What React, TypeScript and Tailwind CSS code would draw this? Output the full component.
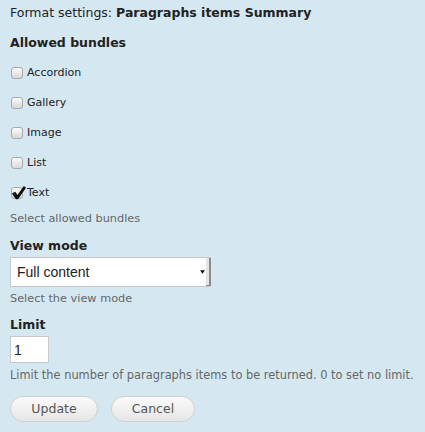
import React, { useState } from 'react'

const bundles = ['Accordion', 'Gallery', 'Image', 'List', 'Text']

function Checkbox({ checked, onChange }: { checked: boolean; onChange: () => void }) {
  return (
    <button
      type="button"
      onClick={onChange}
      className="relative w-[12px] h-[12px] rounded-[3px] border border-[#a9a9a9] bg-gradient-to-b from-[#fcfcfc] to-[#d8d8d8] shrink-0"
    >
      {checked && (
        <svg viewBox="0 0 14 14" className="absolute left-[-1px] top-[-3px] w-[15px] h-[15px]">
          <path d="M0.8 8 L4 6.4 L6 9.4 L12 1 L14 2.6 L6.6 13.2 L4.6 13.2 Z" fill="#111" />
        </svg>
      )}
    </button>
  )
}

export default function App() {
  const [checked, setChecked] = useState<Record<string, boolean>>({ Text: true })
  const [limit, setLimit] = useState('1')

  return (
    <div className="w-[425px] h-[432px] bg-[#d5e8f1] px-[10px] pt-[4px] flex flex-col text-[#222] font-['DejaVu_Sans',sans-serif]">
      <div className="text-[12.5px] leading-[18px]">
        Format settings: <span className="font-bold">Paragraphs items Summary</span>
      </div>

      <div className="mt-[12px] text-[12.5px] leading-[18px] font-bold">Allowed bundles</div>

      <div className="mt-[6px] flex flex-col">
        {bundles.map((b) => (
          <label key={b} className="h-[30px] flex items-center gap-[4px] pl-[1px] text-[11px]">
            <Checkbox
              checked={!!checked[b]}
              onChange={() => setChecked((c) => ({ ...c, [b]: !c[b] }))}
            />
            {b}
          </label>
        ))}
      </div>

      <div className="mt-[3px] text-[11.3px] leading-[16px] text-[#666]">Select allowed bundles</div>

      <div className="mt-[10px] text-[12.5px] leading-[18px] font-bold">View mode</div>
      <div className="mt-[2px] w-[201px] h-[30px] flex border border-[#c8c8c8] border-r-0 bg-white">
        <div className="flex-1 flex items-center pl-[6px] text-[14px] text-[#222] font-['Liberation_Sans',Arial,sans-serif]">
          Full content
        </div>
        <div className="w-[7px] flex items-center justify-start">
          <svg viewBox="0 0 6 4" className="w-[5px] h-[4px] ml-[1px]">
            <path d="M0 0 H6 L3 4 Z" fill="#111" />
          </svg>
        </div>
        <div className="w-[5px] bg-[#e4e4e4] border-r-[2px] border-b-[1px] border-[#8a8a8a]" />
      </div>

      <div className="mt-[4px] text-[11.3px] leading-[16px] text-[#666]">Select the view mode</div>

      <div className="mt-[9px] text-[12.5px] leading-[18px] font-bold">Limit</div>
      <input
        value={limit}
        onChange={(e) => setLimit(e.target.value)}
        className="mt-[2px] w-[39px] h-[27px] border border-[#c8c8c8] bg-white pl-[3px] text-[14px] text-[#222] outline-none font-['Liberation_Sans',Arial,sans-serif]"
      />
      <div className="mt-[4px] text-[11.4px] leading-[16px] text-[#666] whitespace-nowrap">
        Limit the number of paragraphs items to be returned. 0 to set no limit.
      </div>

      <div className="mt-[13px] flex gap-[13px]">
        <button className="w-[88px] h-[26px] rounded-full border border-[#d0d0d0] bg-gradient-to-b from-[#fafafa] to-[#e6e6e6] text-[12.5px] text-[#555]">
          Update
        </button>
        <button className="w-[84px] h-[26px] rounded-full border border-[#d0d0d0] bg-gradient-to-b from-[#fafafa] to-[#e6e6e6] text-[12.5px] text-[#555]">
          Cancel
        </button>
      </div>
    </div>
  )
}
